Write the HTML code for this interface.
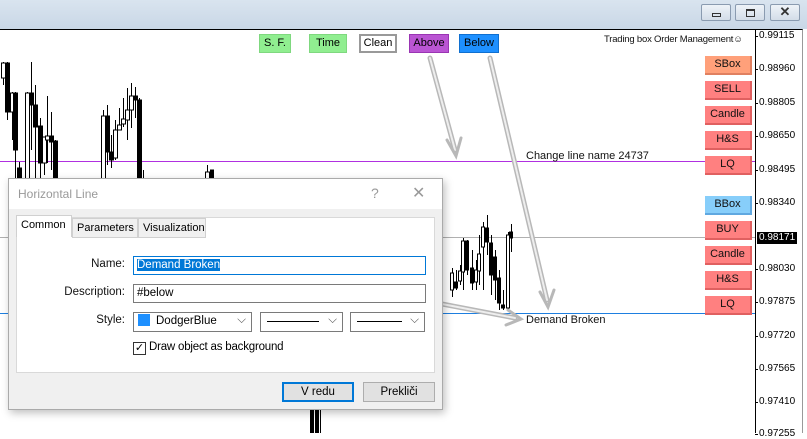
<!DOCTYPE html>
<html><head><meta charset="utf-8"><style>
*{margin:0;padding:0;box-sizing:border-box}
body{width:807px;height:433px;overflow:hidden;position:relative;background:#fff;font-family:"Liberation Sans",sans-serif;font-size:11px}
.abs{position:absolute}
.wb{position:absolute;top:4px;width:30px;height:17px;border:1px solid #8a9bb0;border-radius:2px;background:linear-gradient(#eef3f8,#d3dde8)}
.tb{position:absolute;top:34px;height:19px;font-size:11px;text-align:center;line-height:17px;color:#000}
.rb{position:absolute;left:705px;width:47px;height:19px;background:#ff8080;border-right:2px solid #e06060;border-bottom:2px solid #e06060;text-align:center;line-height:17px;font-size:11px;color:#111}
.pl{position:absolute;left:759px;font-size:10px;color:#000}
.pl:before{content:"";position:absolute;left:-4px;top:6px;width:3px;height:1px;background:#000}
.lbl{position:absolute;font-size:11.5px;color:#111;text-align:right}
.inp{position:absolute;height:19px;border:1px solid #7a7a7a;background:#fff;font-size:11.5px;padding:1px 3px;line-height:15px}
.tab{position:absolute;height:20px;border:1px solid #d0d0d0;background:#f0f0f0;font-size:11px;padding:3px 4px}
.btn{position:absolute;height:20px;border:1px solid #adadad;background:#e1e1e1;font-size:11.5px;text-align:center;line-height:18px}
</style></head><body>
<div class="abs" style="left:0;top:0;width:807px;height:29px;background:linear-gradient(#d9e4ef,#c9d7e6)"></div>
<div class="wb" style="left:701px"><div class="abs" style="left:10px;top:8px;width:9px;height:4px;border:1px solid #333"></div></div>
<div class="wb" style="left:735px"><div class="abs" style="left:10px;top:4px;width:9px;height:8px;border:1px solid #333;border-top-width:2px"></div></div>
<div class="wb" style="left:770px;text-align:center;font-size:13px;line-height:14px;font-weight:bold;color:#333">✕</div>
<div class="abs" style="left:0;top:29px;width:803px;height:404px;background:#fff;border-top:1px solid #000;border-right:1px solid #999"></div>
<div class="abs" style="left:755px;top:30px;width:1px;height:403px;background:#000"></div>
<div class="abs" style="left:0;top:161px;width:755px;height:1px;background:#b030e0"></div>
<div class="abs" style="left:0;top:237px;width:755px;height:1px;background:#b0b0b0"></div>
<div class="abs" style="left:0;top:313px;width:755px;height:1px;background:#1e7fe0"></div>
<svg class="abs" style="left:0;top:0" width="807" height="433">
<g stroke="#000" stroke-width="1" fill="#fff">
<line x1="3.5" y1="62" x2="3.5" y2="85"/><rect x="1.5" y="63" width="4" height="15"/>
<line x1="7.5" y1="62" x2="7.5" y2="120"/><rect x="5.5" y="63" width="4" height="49" fill="#000"/>
<line x1="12.5" y1="92" x2="12.5" y2="140"/><rect x="10.5" y="93" width="4" height="19"/>
<line x1="15.5" y1="92" x2="15.5" y2="180"/><rect x="13.5" y="93" width="4" height="57" fill="#000"/>
<line x1="19.5" y1="162" x2="19.5" y2="180"/><rect x="17.5" y="168" width="4" height="12" fill="#000"/>
<line x1="27.5" y1="92" x2="27.5" y2="180"/><rect x="25.5" y="93" width="4" height="87"/>
<line x1="31.5" y1="62" x2="31.5" y2="150"/><rect x="29.5" y="93" width="4" height="12" fill="#000"/>
<line x1="35.5" y1="85" x2="35.5" y2="200"/><rect x="33.5" y="105" width="4" height="22" fill="#000"/>
<line x1="40.5" y1="118" x2="40.5" y2="180"/><rect x="38.5" y="126" width="4" height="37" fill="#000"/>
<line x1="44.5" y1="137" x2="44.5" y2="175"/><rect x="42.5" y="137" width="4" height="26"/>
<line x1="47.5" y1="96" x2="47.5" y2="163"/><rect x="45.5" y="136" width="4" height="4"/>
<line x1="51.5" y1="112" x2="51.5" y2="170"/><rect x="49.5" y="136" width="4" height="6" fill="#000"/>
<line x1="55.5" y1="140" x2="55.5" y2="180"/><rect x="53.5" y="141" width="4" height="39" fill="#000"/>
<line x1="103.5" y1="110" x2="103.5" y2="180"/><rect x="101.5" y="116" width="4" height="64"/>
<line x1="107.5" y1="105" x2="107.5" y2="165"/><rect x="105.5" y="116" width="4" height="36" fill="#000"/>
<line x1="111.5" y1="135" x2="111.5" y2="168"/><rect x="109.5" y="152" width="4" height="8" fill="#000"/>
<line x1="115.5" y1="120" x2="115.5" y2="160"/><rect x="113.5" y="130" width="4" height="28"/>
<line x1="119.5" y1="108" x2="119.5" y2="128"/><rect x="117.5" y="125" width="4" height="5"/>
<line x1="123.5" y1="98" x2="123.5" y2="127"/><rect x="121.5" y="119" width="4" height="5"/>
<line x1="127.5" y1="88" x2="127.5" y2="140"/><rect x="125.5" y="110" width="4" height="10"/>
<line x1="131.5" y1="83" x2="131.5" y2="128"/><rect x="129.5" y="96" width="4" height="14"/>
<line x1="135.5" y1="87" x2="135.5" y2="118"/><rect x="133.5" y="96" width="4" height="4" fill="#000"/>
<line x1="139.5" y1="98" x2="139.5" y2="180"/><rect x="137.5" y="100" width="4" height="80" fill="#000"/>
<line x1="143.5" y1="170" x2="143.5" y2="180"/>
<line x1="207.5" y1="165" x2="207.5" y2="180"/><rect x="205.5" y="172" width="4" height="8"/><rect x="210.5" y="170" width="3" height="8" fill="#000"/>
<line x1="452.5" y1="268" x2="452.5" y2="297"/><rect x="450.5" y="273" width="3" height="17"/>
<line x1="456.5" y1="270" x2="456.5" y2="290"/><rect x="454.5" y="282" width="3" height="6" fill="#000"/>
<line x1="460.5" y1="265" x2="460.5" y2="285"/><rect x="458.5" y="271" width="3" height="10"/>
<line x1="463.5" y1="238" x2="463.5" y2="290"/><rect x="461.5" y="241" width="3" height="31"/>
<line x1="467.5" y1="240" x2="467.5" y2="275"/><rect x="465.5" y="241" width="3" height="29" fill="#000"/>
<line x1="472.5" y1="250" x2="472.5" y2="290"/><rect x="470.5" y="268" width="3" height="15" fill="#000"/>
<line x1="476.5" y1="260" x2="476.5" y2="290"/><rect x="474.5" y="270" width="3" height="12"/>
<line x1="479.5" y1="235" x2="479.5" y2="285"/><rect x="477.5" y="254" width="3" height="17"/>
<line x1="483.5" y1="222" x2="483.5" y2="290"/><rect x="481.5" y="227" width="3" height="20"/>
<line x1="487.5" y1="215" x2="487.5" y2="255"/><rect x="485.5" y="228" width="3" height="14" fill="#000"/>
<line x1="491.5" y1="235" x2="491.5" y2="295"/><rect x="489.5" y="243" width="3" height="32" fill="#000"/>
<line x1="495.5" y1="250" x2="495.5" y2="300"/><rect x="493.5" y="257" width="3" height="23" fill="#000"/>
<line x1="499.5" y1="270" x2="499.5" y2="310"/><rect x="497.5" y="278" width="3" height="25" fill="#000"/>
<line x1="503.5" y1="290" x2="503.5" y2="310"/><rect x="501.5" y="305" width="3" height="3" fill="#000"/>
<line x1="508.5" y1="232" x2="508.5" y2="309"/><rect x="506.5" y="235" width="3" height="73"/>
<line x1="511.5" y1="224" x2="511.5" y2="252"/><rect x="509.5" y="232" width="3" height="6" fill="#000"/>
<rect x="310.5" y="410" width="3" height="23" fill="#000"/><rect x="315.5" y="410" width="3" height="23" fill="#000"/><line x1="320.5" y1="410" x2="320.5" y2="433"/>
</g>
<g fill="none" stroke-linecap="round">
<line x1="430" y1="58" x2="455" y2="150" stroke="#b8b8b8" stroke-width="5"/><line x1="430" y1="58" x2="455" y2="150" stroke="#eee" stroke-width="2"/>
<path d="M447 140 L456 156 L461 138" stroke="#b8b8b8" stroke-width="3"/>
<line x1="490" y1="58" x2="547" y2="300" stroke="#b8b8b8" stroke-width="5"/><line x1="490" y1="58" x2="547" y2="300" stroke="#eee" stroke-width="2"/>
<path d="M540 292 L548 307 L554 290" stroke="#b8b8b8" stroke-width="3"/>
<line x1="228" y1="263" x2="515" y2="318" stroke="#b8b8b8" stroke-width="5"/><line x1="228" y1="263" x2="515" y2="318" stroke="#eee" stroke-width="2"/>
<path d="M508 310 L521 319 L506 325" stroke="#b8b8b8" stroke-width="3"/>
</g>
</svg>
<div class="tb" style="left:259px;width:32px;background:#90ee90;border:1px solid #7fd87f">S. F.</div>
<div class="tb" style="left:309px;width:38px;background:#90ee90;border:1px solid #7fd87f">Time</div>
<div class="tb" style="left:359px;width:38px;background:#fff;border:2px solid #999;line-height:15px">Clean</div>
<div class="tb" style="left:409px;width:40px;background:#ba55d3;border:1px solid #9a35b3">Above</div>
<div class="tb" style="left:459px;width:40px;background:#1e90ff;border:1px solid #1070d0">Below</div>
<div class="abs" style="left:604px;top:34px;font-size:9.5px;color:#111;white-space:nowrap;letter-spacing:-0.2px">Trading box Order Management☺</div>
<div class="rb" style="top:56px;background:#ffa07a;border-color:#e08060">SBox</div>
<div class="rb" style="top:81px">SELL</div>
<div class="rb" style="top:106px">Candle</div>
<div class="rb" style="top:131px">H&amp;S</div>
<div class="rb" style="top:156px">LQ</div>
<div class="rb" style="top:196px;background:#87cefa;border-color:#60a8e0">BBox</div>
<div class="rb" style="top:221px">BUY</div>
<div class="rb" style="top:246px">Candle</div>
<div class="rb" style="top:271px">H&amp;S</div>
<div class="rb" style="top:296px">LQ</div>
<div class="abs" style="left:526px;top:150px;font-size:11px;color:#111">Change line name 24737</div>
<div class="abs" style="left:526px;top:314px;font-size:11px;color:#111">Demand Broken</div>
<div class="pl" style="top:30px">0.99115</div>
<div class="pl" style="top:63px">0.98960</div>
<div class="pl" style="top:97px">0.98805</div>
<div class="pl" style="top:130px">0.98650</div>
<div class="pl" style="top:164px">0.98495</div>
<div class="pl" style="top:197px">0.98340</div>
<div class="pl" style="top:263px">0.98030</div>
<div class="pl" style="top:296px">0.97875</div>
<div class="pl" style="top:330px">0.97720</div>
<div class="pl" style="top:363px">0.97565</div>
<div class="pl" style="top:396px">0.97410</div>
<div class="pl" style="top:428px">0.97255</div>
<div class="abs" style="left:757px;top:232px;width:40px;height:12px;background:#000;color:#fff;font-size:10px;padding-left:2px;line-height:12px">0.98171</div>
<div class="abs" style="left:8px;top:178px;width:435px;height:232px;background:#f0f0f0;border:1px solid #aaa;box-shadow:2px 3px 8px rgba(0,0,0,.25)">
<div class="abs" style="left:0;top:0;width:433px;height:30px;background:#fff"></div>
<div class="abs" style="left:9px;top:8px;font-size:12px;color:#999">Horizontal Line</div>
<div class="abs" style="left:362px;top:6px;font-size:14px;color:#999">?</div>
<div class="abs" style="left:403px;top:4px;font-size:16px;color:#999">✕</div>
<div class="abs" style="left:7px;top:38px;width:419px;height:156px;background:#fff;border:1px solid #d9d9d9"></div>
<div class="tab" style="left:7px;width:56px;background:#fff;border-bottom:none;height:22px;top:36px">Common</div>
<div class="tab" style="left:63px;top:39px;width:66px">Parameters</div>
<div class="tab" style="left:129px;top:39px;width:68px">Visualization</div>
<div class="lbl" style="left:36px;top:79px;width:80px">Name:</div>
<div class="lbl" style="left:36px;top:107px;width:80px">Description:</div>
<div class="lbl" style="left:36px;top:135px;width:80px">Style:</div>
<div class="inp" style="left:124px;top:77px;width:293px;border-color:#0078d7"><span style="background:#0078d7;color:#fff">Demand Broken</span></div>
<div class="inp" style="left:124px;top:105px;width:293px">#below</div>
<div class="inp" style="left:124px;top:133px;width:119px;height:20px;padding-left:4px"><span style="display:inline-block;width:12px;height:12px;background:#1e90ff;vertical-align:-2px;margin-right:6px"></span>DodgerBlue<span style="position:absolute;right:5px;top:0;color:#555">⌵</span></div>
<div class="inp" style="left:251px;top:133px;width:83px;height:20px"><span style="position:absolute;left:6px;top:8px;width:52px;height:1px;background:#000"></span><span style="position:absolute;right:5px;top:0;color:#555">⌵</span></div>
<div class="inp" style="left:341px;top:133px;width:75px;height:20px"><span style="position:absolute;left:6px;top:8px;width:45px;height:1px;background:#000"></span><span style="position:absolute;right:5px;top:0;color:#555">⌵</span></div>
<div class="abs" style="left:124px;top:163px;width:13px;height:13px;border:1px solid #333;background:#fff;font-size:11px;line-height:11px;text-align:center">✓</div>
<div class="abs" style="left:140px;top:162px;font-size:11.5px;letter-spacing:-0.2px">Draw object as background</div>
<div class="btn" style="left:273px;top:203px;width:72px;border:2px solid #0078d7;line-height:16px">V redu</div>
<div class="btn" style="left:354px;top:203px;width:72px">Prekliči</div>
</div>
</body></html>
